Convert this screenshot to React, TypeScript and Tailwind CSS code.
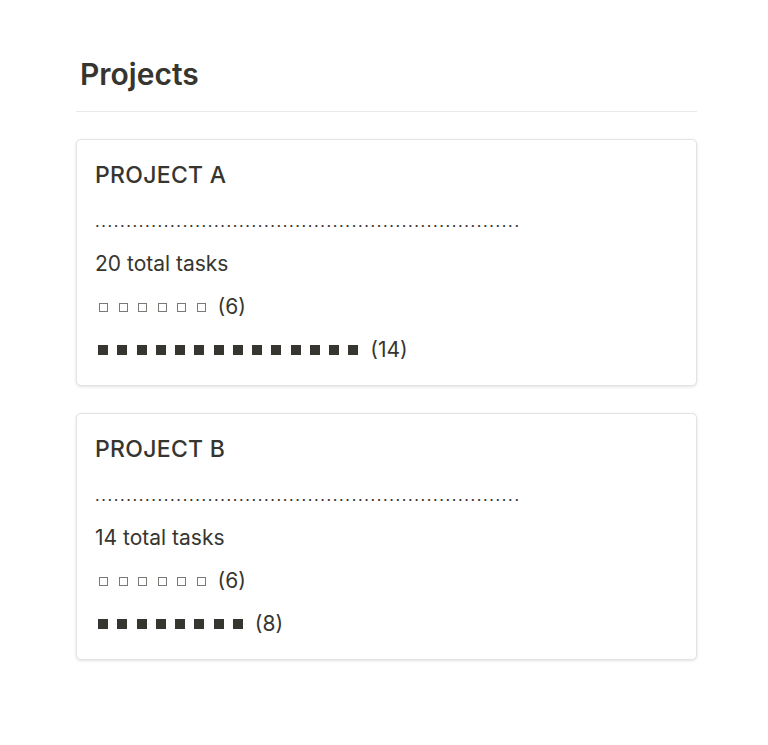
const projects = [
  { name: 'PROJECT A', total: 20, open: 6, done: 14 },
  { name: 'PROJECT B', total: 14, open: 6, done: 8 },
];

function ProjectCard({ name, total, open, done }: { name: string; total: number; open: number; done: number }) {
  return (
    <div className="rounded-[5px] border border-[#e3e3e1] bg-white px-[18px] pt-[13px] pb-[14px] shadow-[0_1px_3px_rgba(15,15,15,0.12)]">
      <div className="flex h-11 items-center text-[23px] font-medium tracking-[0.3px]">{name}</div>
      <div className="flex h-[45px] items-center pt-[2px] text-[16px] leading-none tracking-[1.65px] text-[#37352f]">
        {'.'.repeat(68)}
      </div>
      <div className="flex h-11 items-center text-[21px]">{total} total tasks</div>
      <div className="flex h-[42px] items-center text-[21px]">
        <div className="flex gap-[10.5px] pl-[4px]">
          {Array.from({ length: open }).map((_, i) => (
            <span key={i} className="block h-[9px] w-[9px] border border-[#7a7975]" />
          ))}
        </div>
        <span className="ml-[12px]">({open})</span>
      </div>
      <div className="flex h-[43px] items-center text-[21px]">
        <div className="flex gap-[9.25px] pl-[3px]">
          {Array.from({ length: done }).map((_, i) => (
            <span key={i} className="block h-[10px] w-[10px] bg-[#37352f]" />
          ))}
        </div>
        <span className="ml-[12px]">({done})</span>
      </div>
    </div>
  );
}

export default function App() {
  return (
    <div className="min-h-[745px] bg-white font-['Inter',sans-serif] text-[#37352f]">
      <div className="ml-[76px] w-[621px] pt-[54px]">
        <h1 className="pl-[4px] text-[30px] font-semibold leading-[40px]">Projects</h1>
        <div className="mt-[17px] h-px bg-[#e9e9e7]" />
        <div className="mt-[27px] flex flex-col gap-[27px]">
          {projects.map((p) => (
            <ProjectCard key={p.name} {...p} />
          ))}
        </div>
      </div>
    </div>
  );
}
